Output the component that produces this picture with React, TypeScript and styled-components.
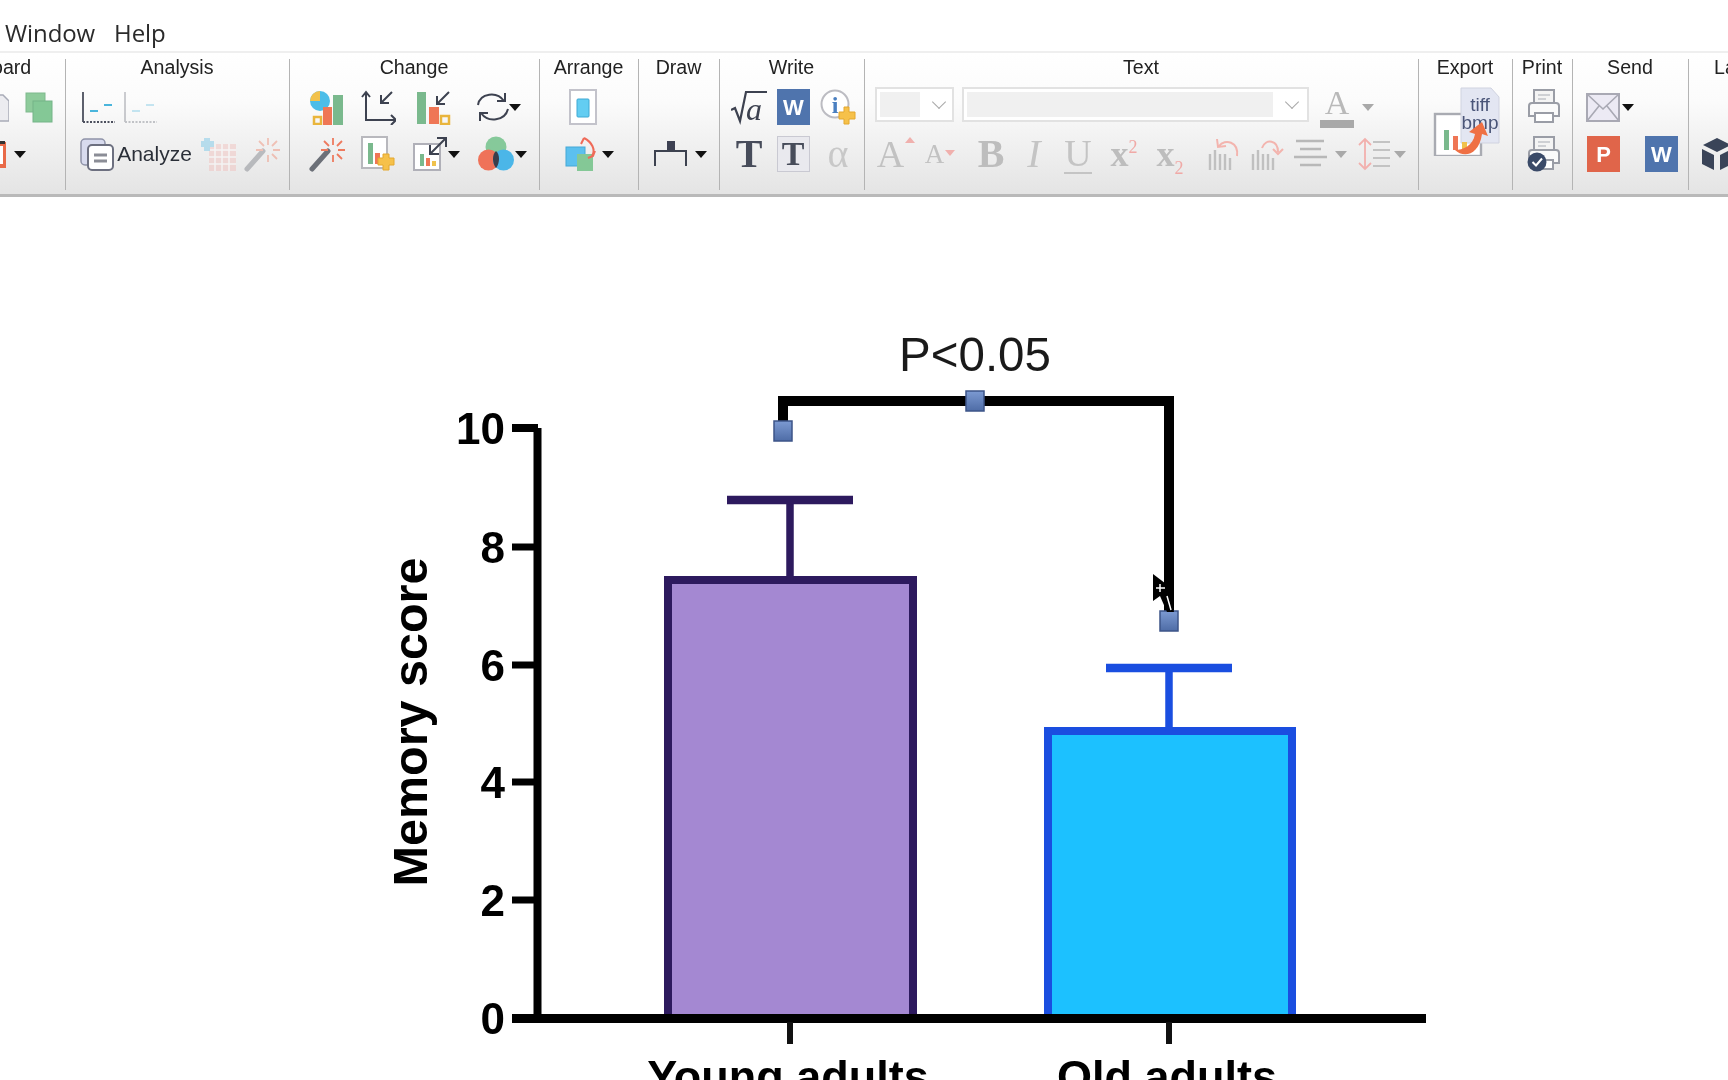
import React from 'react'
import styled, { createGlobalStyle } from 'styled-components'

const GlobalStyle = createGlobalStyle`
  html, body, #root {
    margin: 0;
    height: 100%;
    background: #fff;
    overflow: hidden;
  }
  body {
    font-family: "Liberation Sans", Arial, sans-serif;
  }
`

const Page = styled.div`
  display: flex;
  flex-direction: column;
  width: 1728px;
  height: 1080px;
  overflow: hidden;
`

const MenuBar = styled.div`
  display: flex;
  align-items: center;
  gap: 19px;
  height: 51px;
  padding: 13px 0 0 5px;
  box-sizing: border-box;
  flex: none;
  font-family: "Open Sans", sans-serif;
  font-size: 24px;
  letter-spacing: -0.1px;
  color: #2a2a2a;
  filter: blur(0.4px);
`

const Ribbon = styled.div`
  display: flex;
  flex: none;
  height: 146px;
  box-sizing: border-box;
  border-top: 2px solid #efefef;
  border-bottom: 3px solid #b9b9b9;
  background: linear-gradient(#ffffff 0%, #fbfbfb 35%, #e4e4e4 100%);
  overflow: hidden;
  filter: blur(0.6px);
`

const Group = styled.div<{ $width: number }>`
  position: relative;
  flex: none;
  width: ${({ $width }) => $width}px;

  &::after {
    content: '';
    position: absolute;
    right: 0;
    top: 6px;
    bottom: 4px;
    width: 1px;
    background: #b4b4b4;
  }
`

const LastGroup = styled.div`
  flex: 1;
  overflow: hidden;
`

const GroupLabel = styled.div<{ $left?: number }>`
  height: 28px;
  line-height: 28px;
  text-align: ${({ $left }) => ($left !== undefined ? 'left' : 'center')};
  margin-left: ${({ $left }) => $left ?? -2}px;
  font-size: 19.600px;
  color: #222;
  white-space: nowrap;
`

const Rows = styled.div`
  display: flex;
  flex-direction: column;
  gap: 3px;
  padding-top: 4px;
`

const Row = styled.div`
  display: flex;
  align-items: center;
  height: 44px;
`

const Slot = styled.div<{ $w?: number; $ml?: number }>`
  display: flex;
  align-items: center;
  justify-content: center;
  flex: none;
  width: ${({ $w }) => $w ?? 36}px;
  margin-left: ${({ $ml }) => $ml ?? 0}px;
  height: 36px;
`

const Dim = styled.div`
  display: flex;
  opacity: 0.4;
`

const Arrow = styled.div<{ $muted?: boolean }>`
  width: 0;
  height: 0;
  border-left: 6px solid transparent;
  border-right: 6px solid transparent;
  border-top: 7px solid ${({ $muted }) => ($muted ? '#a9a9a9' : '#111')};
`

const AnalyzeLabel = styled.span`
  font-size: 21px;
  color: #2a2f38;
`

const Glyph = styled.span<{ $size: number; $color: string; $bold?: boolean; $italic?: boolean; $under?: boolean }>`
  font-family: "Liberation Serif", serif;
  font-size: ${({ $size }) => $size}px;
  line-height: 1;
  color: ${({ $color }) => $color};
  font-weight: ${({ $bold }) => ($bold ? 700 : 400)};
  font-style: ${({ $italic }) => ($italic ? 'italic' : 'normal')};
  border-bottom: ${({ $under, $color }) => ($under ? `2px solid ${$color}` : 'none')};
  white-space: nowrap;

  sup, sub {
    font-size: 0.5em;
    font-weight: 400;
    color: #f0a9a6;
    line-height: 0;
  }
`

const BoxedGlyph = styled(Slot)`
  background: #e9e9ee;
  border: 1px solid #c9c9d2;
  box-sizing: border-box;
  width: 33px;
  height: 36px;
`

const SizeStep = styled.div`
  display: flex;
  align-items: flex-start;
  gap: 1px;
`

const Caret = styled.div<{ $up?: boolean }>`
  width: 0;
  height: 0;
  margin-top: ${({ $up }) => ($up ? 2 : 9)}px;
  border-left: 5px solid transparent;
  border-right: 5px solid transparent;
  border-bottom: ${({ $up }) => ($up ? '6px solid #f0b0ad' : 'none')};
  border-top: ${({ $up }) => ($up ? 'none' : '6px solid #f0b0ad')};
`

const ColorSwatch = styled.div`
  display: flex;
  flex-direction: column;
  align-items: center;
  width: 34px;

  &::after {
    content: '';
    align-self: stretch;
    height: 8px;
    background: #a9a9a9;
  }
`

const Combo = styled.div<{ $w: number; $ml: number; $fill: number }>`
  display: flex;
  align-items: center;
  box-sizing: border-box;
  flex: none;
  width: ${({ $w }) => $w}px;
  margin: -6px 0 0 ${({ $ml }) => $ml}px;
  height: 35px;
  padding: 3px 0 3px 3px;
  background: #fff;
  border: 2px solid #e2e2e2;

  &::before {
    content: '';
    width: ${({ $fill }) => $fill}px;
    align-self: stretch;
    background: #f0f0f0;
  }
`

const Chevron = styled.div`
  width: 9px;
  height: 9px;
  margin: -5px 0 0 14px;
  border-right: 1.5px solid #a8a8a8;
  border-bottom: 1.5px solid #a8a8a8;
  transform: rotate(45deg);
`

const BigSlot = styled.div`
  width: 70px;
  height: 70px;
  margin: 5px 0 0 14px;
`

const Canvas = styled.div`
  flex: 1;
  min-height: 0;
  filter: blur(0.35px);
`

const ChartSvg = styled.svg`
  display: block;
`

const Icon = ({ children, size = 36 }: { children: React.ReactNode; size?: number }) => (
  <svg width={size} height={size} viewBox="0 0 36 36" fill="none">
    {children}
  </svg>
)

const Handle = ({ x, y }: { x: number; y: number }) => (
  <rect x={x - 9} y={y - 10} width={18} height={20} fill="url(#handle)" stroke="#3d5488" strokeWidth={1.5} />
)

const CopyGreen = () => (
  <Icon>
    <rect x="7" y="4" width="19" height="19" fill="#8ecb9b" stroke="#7fb98d" />
    <rect x="14" y="12" width="19" height="21" fill="#84c896" stroke="#74b488" />
  </Icon>
)

const PaperCropped = () => (
  <svg width="9" height="36" viewBox="0 0 9 36" fill="none">
    <path d="M0 6h3l6 6v20H0" fill="#ececf0" stroke="#a9acb8" strokeWidth="1.5" />
  </svg>
)

const RedCropped = () => (
  <svg width="8" height="36" viewBox="0 0 8 36" fill="none">
    <rect x="-4" y="6" width="10" height="26" fill="#e96a48" />
    <rect x="-4" y="10" width="7" height="18" fill="#fff" />
    <rect x="-4" y="5" width="9" height="3" fill="#333" />
  </svg>
)

const ErrorPlot = ({ faint }: { faint?: boolean }) => (
  <Icon>
    <g opacity={faint ? 0.3 : 1}>
      <path d="M4 3v30" stroke="#4b4f5d" strokeWidth="1.8" />
      <path d="M4 33h32" stroke="#4b4f5d" strokeWidth="1.8" strokeDasharray="2 1.5" />
      <path d="M11 22h8M25 16h8" stroke="#4ab5dc" strokeWidth="2" />
    </g>
  </Icon>
)

const AnalyzeIcon = () => (
  <Icon>
    <rect x="2" y="3" width="24" height="26" rx="4" fill="#d8dbee" stroke="#8f93a8" strokeWidth="1.5" />
    <rect x="9" y="9" width="25" height="25" rx="4" fill="#fff" stroke="#6d7080" strokeWidth="2" />
    <path d="M15 19h13M15 25h13" stroke="#8b8d96" strokeWidth="3" />
  </Icon>
)

const GridIcon = () => (
  <Dim>
    <Icon>
      <rect x="8" y="8" width="27" height="27" fill="#f2b8b4" />
      <path d="M14 8v27M21 8v27M28 8v27M8 14h27M8 21h27M8 28h27" stroke="#fff" strokeWidth="1.5" />
      <path d="M3 2h6v3h4v6h-4v4H3v-4H0V5h3z" fill="#60bfe6" />
    </Icon>
  </Dim>
)

const Wand = ({ dim }: { dim?: boolean }) => {
  const icon = (
    <Icon>
      <path d="M3 33L19 15" stroke="#6c7078" strokeWidth="5" strokeLinecap="round" />
      <path d="M24 2v7M24 19v7M12 14h7M29 14h7M15 5l5 5M33 5l-5 5M33 23l-5-5" stroke="#ee7a5e" strokeWidth="1.8" />
    </Icon>
  )
  return dim ? <Dim>{icon}</Dim> : icon
}

const PieBars = () => (
  <Icon>
    <circle cx="11" cy="12" r="10" fill="#4cbde8" />
    <path d="M11 12V2A10 10 0 0 0 1 12z" fill="#f3c24b" />
    <rect x="24" y="6" width="10" height="30" fill="#7ab98d" />
    <rect x="14" y="18" width="9" height="18" fill="#ef7655" />
    <rect x="5" y="28" width="7" height="7" fill="none" stroke="#e9b53c" strokeWidth="2.500" />
  </Icon>
)

const AxisArrows = () => (
  <Icon>
    <path d="M6 3v28h30M2 8l4-5 4 5M31 26l5 5-5 5" stroke="#3d4250" strokeWidth="2" />
    <path d="M32 3L21 14M21 6v8h8" stroke="#3d4250" strokeWidth="2" />
  </Icon>
)

const BarsArrow = () => (
  <Icon>
    <rect x="1" y="3" width="9" height="32" fill="#7ab98d" />
    <rect x="13" y="18" width="10" height="17" fill="#ef7655" />
    <rect x="25" y="27" width="8" height="8" fill="none" stroke="#e9b53c" strokeWidth="2.500" />
    <path d="M33 3L21 15M21 7v8h8" stroke="#3d4250" strokeWidth="2" />
  </Icon>
)

const Refresh = () => (
  <Icon>
    <path d="M3 16C5 4 22 2 29 12M33 20C30 32 13 34 6 24" stroke="#3d4250" strokeWidth="2" />
    <path d="M22 12h8V4M13 24H5v8" stroke="#3d4250" strokeWidth="2" />
  </Icon>
)

const ChartPlus = () => (
  <Icon>
    <rect x="2" y="1" width="25" height="31" fill="#fff" stroke="#b8b8bd" strokeWidth="2" />
    <rect x="8" y="7" width="5" height="21" fill="#7ab98d" />
    <rect x="15" y="17" width="5" height="11" fill="#ef7655" />
    <path d="M23 18h6v4h5v7h-5v5h-6v-5h-5v-7h5z" fill="#f6c14a" stroke="#e4a82f" />
  </Icon>
)

const ChartResize = () => (
  <Icon>
    <rect x="2" y="8" width="26" height="26" fill="#fff" stroke="#b0b0b8" strokeWidth="2" />
    <rect x="8" y="18" width="4" height="12" fill="#7ab98d" />
    <rect x="14" y="22" width="4" height="8" fill="#ef7655" />
    <rect x="20" y="25" width="4" height="5" fill="#f0c24c" />
    <path d="M18 18L34 2M25 2h9v9M18 9v9h9" stroke="#3d4250" strokeWidth="2" />
  </Icon>
)

const Venn = () => (
  <Icon>
    <circle cx="18" cy="11" r="10.5" fill="#86c99a" />
    <circle cx="10.5" cy="24" r="10.5" fill="#ef7259" />
    <circle cx="25.5" cy="24" r="10.5" fill="#4bb6e8" />
    <path d="M18 15c4 3 4 12 0 17-4-5-4-14 0-17z" fill="#3b3d4a" />
  </Icon>
)

const BringFront = () => (
  <Icon>
    <rect x="5" y="1" width="26" height="34" fill="#fff" stroke="#c3c3cb" strokeWidth="2" />
    <rect x="12" y="10" width="12" height="18" rx="1" fill="#63cdf2" stroke="#3fa9d4" />
  </Icon>
)

const Rotate = () => (
  <Icon>
    <rect x="2" y="11" width="19" height="19" fill="#5cc0ee" stroke="#45a8d6" />
    <rect x="13" y="18" width="16" height="17" fill="#84c896" />
    <path d="M20 2c8 4 12 12 8 18M24 22l5-2 2-5M20 2l-3 6" stroke="#ef6a58" strokeWidth="2" />
  </Icon>
)

const Connector = () => (
  <Icon>
    <rect x="15" y="5" width="8" height="9" fill="#3d4152" />
    <path d="M3 30V15h31v15" stroke="#3d4250" strokeWidth="2" />
  </Icon>
)

const Sqrt = () => (
  <Icon>
    <path d="M0 21l4-2 5 13L15 3h21" stroke="#3d4250" strokeWidth="2.200" />
    <text x="15" y="31" fontFamily="Liberation Serif, serif" fontStyle="italic" fontSize="32" fill="#3d4250">
      a
    </text>
  </Icon>
)

const OfficeTile = ({ letter, color }: { letter: string; color: string }) => (
  <svg width="33" height="36" viewBox="0 0 33 36">
    <rect width="33" height="36" fill={color} />
    <text x="16.5" y="26" textAnchor="middle" fontFamily="Liberation Sans, sans-serif" fontWeight="700" fontSize="22" fill="#fff">
      {letter}
    </text>
  </svg>
)

const InfoPlus = () => (
  <Icon>
    <circle cx="15" cy="15" r="13.5" fill="#fff" stroke="#bcbcc2" strokeWidth="2" />
    <text x="15" y="24" textAnchor="middle" fontFamily="Liberation Serif, serif" fontWeight="700" fontSize="24" fill="#4a7fc0">
      i
    </text>
    <path d="M24 18h5v5h6v7h-6v5h-5v-5h-5v-7h5z" fill="#f6c14a" stroke="#e4a82f" />
  </Icon>
)

const FontColor = () => (
  <ColorSwatch>
    <Glyph $size={34} $color="#b9b9b9">A</Glyph>
  </ColorSwatch>
)

const SizeA = ({ up }: { up?: boolean }) => (
  <SizeStep>
    <Glyph $size={up ? 38 : 27} $color="#c2c2c2">A</Glyph>
    <Caret $up={up} />
  </SizeStep>
)

const UndoBars = ({ flip }: { flip?: boolean }) => (
  <Icon>
    <path d="M5 18v16M10 14v20M15 18v16M20 18v16M25 22v12" stroke="#c0c0c0" strokeWidth="2.400" />
    <path
      d={flip ? 'M14 12C18 2 30 4 30 16M25 13l5 5 5-5' : 'M32 20C34 6 20 2 14 10M12 3l1 8 8-1'}
      stroke="#f3b4ae"
      strokeWidth="2"
    />
  </Icon>
)

const AlignLines = () => (
  <Icon>
    <path d="M4 5h28M8 13h21M2 21h33M8 29h21" stroke="#b8b8b8" strokeWidth="2.400" />
  </Icon>
)

const LineSpacing = () => (
  <Icon>
    <path d="M8 3v30M2 9l6-6 6 6M2 27l6 6 6-6" stroke="#f2b0ad" strokeWidth="1.800" />
    <path d="M16 6h17M16 14h17M16 22h17M16 30h17" stroke="#c3c3c3" strokeWidth="2.200" />
  </Icon>
)

const ExportIcon = () => (
  <svg width="70" height="70" viewBox="0 0 70 70" fill="none">
    <rect x="2" y="28" width="46" height="42" fill="#fff" stroke="#a9abb2" strokeWidth="2.400" />
    <path d="M28 2h30l8 9v46H28z" fill="#e3e6f2" stroke="#d0d3e0" />
    <text x="47" y="25" textAnchor="middle" fontFamily="Liberation Sans, sans-serif" fontSize="19" fill="#4a5578">
      tiff
    </text>
    <text x="47" y="43" textAnchor="middle" fontFamily="Liberation Sans, sans-serif" fontSize="19" fill="#4a5578">
      bmp
    </text>
    <rect x="11" y="44" width="5" height="20" fill="#7ab98d" />
    <rect x="20" y="50" width="5" height="14" fill="#ef7655" />
    <rect x="29" y="56" width="5" height="8" fill="#f0c24c" />
    <path d="M22 64c8 8 24 6 27-16l6 2-6-14-13 10 6 2c-2 12-12 16-20 16z" fill="#ef7044" />
  </svg>
)

const Printer = ({ check }: { check?: boolean }) => (
  <Icon>
    <rect x="8" y="1" width="20" height="14" fill="#f4f4f4" stroke="#9a9da6" strokeWidth="2" />
    <path d="M12 6h12M12 10h8" stroke="#c1c3c9" strokeWidth="1.500" />
    <path d="M8 27H3V17q0-3 3-3h24q3 0 3 3v10h-5" fill="#fafafa" stroke="#9a9da6" strokeWidth="2" />
    <rect x="9" y="24" width="18" height="9" fill="#fff" stroke="#9a9da6" strokeWidth="2" />
    {check && (
      <>
        <circle cx="11" cy="26" r="9.500" fill="#3a4a68" />
        <path d="M6.500 26l3.500 3.500 6-7" stroke="#fff" strokeWidth="2" />
      </>
    )}
  </Icon>
)

const Envelope = () => (
  <Icon>
    <rect x="2" y="5" width="32" height="27" fill="#eceaf4" stroke="#a9a9b4" strokeWidth="2" />
    <path d="M2 5l16 15L34 5M2 32l12-15M34 32L22 17" stroke="#a9a9b4" strokeWidth="1.600" />
  </Icon>
)

const Cube = () => (
  <Icon>
    <path d="M18 2l14 7-14 7-14-7z" fill="#3a4458" />
    <path d="M3 13l12 6v15L3 28z" fill="#3a4458" />
    <path d="M33 13l-12 6v15l12-6z" fill="#3a4458" />
  </Icon>
)

const Menu = () => (
  <MenuBar>
    <span>Window</span>
    <span>Help</span>
  </MenuBar>
)

const Toolbar = () => (
  <Ribbon>
    <Group $width={66}>
      <GroupLabel $left={-8}>oard</GroupLabel>
      <Rows>
        <Row>
          <PaperCropped />
          <Slot $ml={10}>
            <CopyGreen />
          </Slot>
        </Row>
        <Row>
          <RedCropped />
          <Slot $w={12} $ml={6}>
            <Arrow />
          </Slot>
        </Row>
      </Rows>
    </Group>

    <Group $width={224}>
      <GroupLabel>Analysis</GroupLabel>
      <Rows>
        <Row>
          <Slot $ml={13}>
            <ErrorPlot />
          </Slot>
          <Slot $ml={6}>
            <ErrorPlot faint />
          </Slot>
        </Row>
        <Row>
          <Slot $ml={13}>
            <AnalyzeIcon />
          </Slot>
          <Slot $w={75} $ml={2}>
            <AnalyzeLabel>Analyze</AnalyzeLabel>
          </Slot>
          <Slot $ml={9}>
            <GridIcon />
          </Slot>
          <Slot $ml={7}>
            <Wand dim />
          </Slot>
        </Row>
      </Rows>
    </Group>

    <Group $width={250}>
      <GroupLabel>Change</GroupLabel>
      <Rows>
        <Row>
          <Slot $ml={19}>
            <PieBars />
          </Slot>
          <Slot $ml={15}>
            <AxisArrows />
          </Slot>
          <Slot $ml={20}>
            <BarsArrow />
          </Slot>
          <Slot $ml={23}>
            <Refresh />
          </Slot>
          <Slot $w={12} $ml={-2}>
            <Arrow />
          </Slot>
        </Row>
        <Row>
          <Slot $ml={19}>
            <Wand />
          </Slot>
          <Slot $ml={15}>
            <ChartPlus />
          </Slot>
          <Slot $ml={16}>
            <ChartResize />
          </Slot>
          <Slot $w={12}>
            <Arrow />
          </Slot>
          <Slot $ml={18}>
            <Venn />
          </Slot>
          <Slot $w={12} $ml={1}>
            <Arrow />
          </Slot>
        </Row>
      </Rows>
    </Group>

    <Group $width={99}>
      <GroupLabel>Arrange</GroupLabel>
      <Rows>
        <Row>
          <Slot $ml={25}>
            <BringFront />
          </Slot>
        </Row>
        <Row>
          <Slot $ml={24}>
            <Rotate />
          </Slot>
          <Slot $w={12} $ml={2}>
            <Arrow />
          </Slot>
        </Row>
      </Rows>
    </Group>

    <Group $width={81}>
      <GroupLabel>Draw</GroupLabel>
      <Rows>
        <Row />
        <Row>
          <Slot $ml={13}>
            <Connector />
          </Slot>
          <Slot $w={12} $ml={7}>
            <Arrow />
          </Slot>
        </Row>
      </Rows>
    </Group>

    <Group $width={145}>
      <GroupLabel>Write</GroupLabel>
      <Rows>
        <Row>
          <Slot $ml={11}>
            <Sqrt />
          </Slot>
          <Slot $ml={8}>
            <OfficeTile letter="W" color="#4f74ad" />
          </Slot>
          <Slot $ml={9}>
            <InfoPlus />
          </Slot>
        </Row>
        <Row>
          <Slot $ml={11}>
            <Glyph $size={40} $color="#474c5a" $bold>T</Glyph>
          </Slot>
          <Slot $ml={8}>
            <BoxedGlyph>
              <Glyph $size={34} $color="#474c5a" $bold>T</Glyph>
            </BoxedGlyph>
          </Slot>
          <Slot $ml={9}>
            <Glyph $size={40} $color="#c8c8c8">α</Glyph>
          </Slot>
        </Row>
      </Rows>
    </Group>

    <Group $width={554}>
      <GroupLabel>Text</GroupLabel>
      <Rows>
        <Row>
          <Combo $w={79} $ml={10} $fill={40}>
            <Chevron />
          </Combo>
          <Combo $w={347} $ml={8} $fill={306}>
            <Chevron />
          </Combo>
          <Slot $ml={10}>
            <FontColor />
          </Slot>
          <Slot $w={12} $ml={7}>
            <Arrow $muted />
          </Slot>
        </Row>
        <Row>
          <Slot $ml={13}>
            <SizeA up />
          </Slot>
          <Slot $ml={8}>
            <SizeA />
          </Slot>
          <Slot $ml={15}>
            <Glyph $size={40} $color="#bdbdbd" $bold>B</Glyph>
          </Slot>
          <Slot $ml={7}>
            <Glyph $size={40} $color="#c4c4c4" $italic>I</Glyph>
          </Slot>
          <Slot $ml={8}>
            <Glyph $size={38} $color="#c4c4c4" $under>U</Glyph>
          </Slot>
          <Slot $ml={10}>
            <Glyph $size={36} $color="#bdbdbd" $bold>x<sup>2</sup></Glyph>
          </Slot>
          <Slot $ml={10}>
            <Glyph $size={36} $color="#bdbdbd" $bold>x<sub>2</sub></Glyph>
          </Slot>
          <Slot $ml={17}>
            <UndoBars />
          </Slot>
          <Slot $ml={7}>
            <UndoBars flip />
          </Slot>
          <Slot $ml={8}>
            <AlignLines />
          </Slot>
          <Slot $w={12} $ml={7}>
            <Arrow $muted />
          </Slot>
          <Slot $ml={10}>
            <LineSpacing />
          </Slot>
          <Slot $w={12} $ml={1}>
            <Arrow $muted />
          </Slot>
        </Row>
      </Rows>
    </Group>

    <Group $width={94}>
      <GroupLabel>Export</GroupLabel>
      <BigSlot>
        <ExportIcon />
      </BigSlot>
    </Group>

    <Group $width={60}>
      <GroupLabel>Print</GroupLabel>
      <Rows>
        <Row>
          <Slot $ml={13}>
            <Printer />
          </Slot>
        </Row>
        <Row>
          <Slot $ml={13}>
            <Printer check />
          </Slot>
        </Row>
      </Rows>
    </Group>

    <Group $width={116}>
      <GroupLabel>Send</GroupLabel>
      <Rows>
        <Row>
          <Slot $ml={12}>
            <Envelope />
          </Slot>
          <Slot $w={12} $ml={1}>
            <Arrow />
          </Slot>
        </Row>
        <Row>
          <Slot $ml={12}>
            <OfficeTile letter="P" color="#e0654a" />
          </Slot>
          <Slot $ml={22}>
            <OfficeTile letter="W" color="#4f74ad" />
          </Slot>
        </Row>
      </Rows>
    </Group>

    <LastGroup>
      <GroupLabel $left={25}>La</GroupLabel>
      <Rows>
        <Row />
        <Row>
          <Slot $ml={10}>
            <Cube />
          </Slot>
        </Row>
      </Rows>
    </LastGroup>
  </Ribbon>
)

const yTicks = [
  { label: '10', y: 428 },
  { label: '8', y: 547 },
  { label: '6', y: 665 },
  { label: '4', y: 782 },
  { label: '2', y: 900 },
  { label: '0', y: 1018 },
]

const bars = [
  { name: 'Young adults', x0: 668, x1: 913, top: 580, cx: 790, capY: 500, labelX: 788, stroke: '#2d1a5e', fill: '#a488d2' },
  { name: 'Old adults', x0: 1048, x1: 1292, top: 731, cx: 1169, capY: 668, labelX: 1167, stroke: '#1a4ee0', fill: '#1cc1ff' },
]

const Chart = () => (
  <ChartSvg width={1728} height={883} viewBox="0 197 1728 883">
    <defs>
      <linearGradient id="handle" x1="0" y1="0" x2="0" y2="1">
        <stop offset="0" stopColor="#7c9ad2" />
        <stop offset="1" stopColor="#4e6ca6" />
      </linearGradient>
    </defs>

    <text x={975} y={371} textAnchor="middle" fontFamily="Liberation Sans, sans-serif" fontSize={47.500} fill="#1a1a1a">
      P&lt;0.05
    </text>

    {bars.map((b) => (
      <g key={b.name} stroke={b.stroke}>
        <rect x={b.x0} y={b.top} width={b.x1 - b.x0} height={1018 - b.top} fill={b.fill} strokeWidth={8} />
        <path d={`M${b.cx} ${b.top}V${b.capY}`} strokeWidth={7.500} />
        <path d={`M${b.cx - 63} ${b.capY}H${b.cx + 63}`} strokeWidth={8.500} />
      </g>
    ))}

    <path d="M537.500 1018V428" stroke="#000" strokeWidth={8} />
    {yTicks.map((t) => (
      <g key={t.label}>
        <path d={`M512 ${t.y}H538`} stroke="#000" strokeWidth={t.label === '10' || t.label === '0' ? 8 : 7} />
        <text x={505} y={t.y + 16} textAnchor="end" fontFamily="Liberation Sans, sans-serif" fontWeight={700} fontSize={44} fill="#000">
          {t.label}
        </text>
      </g>
    ))}
    <path d="M512 1018.500H1426" stroke="#000" strokeWidth={9} />

    {bars.map((b) => (
      <g key={b.name + '-axis'}>
        <path d={`M${b.cx} 1022V1044`} stroke="#111" strokeWidth={6} />
        <text x={b.labelX} y={1092} textAnchor="middle" fontFamily="Liberation Sans, sans-serif" fontWeight={700} fontSize={45} fill="#000">
          {b.name}
        </text>
      </g>
    ))}

    <text
      transform="translate(427 722) rotate(-90)"
      textAnchor="middle"
      fontFamily="Liberation Sans, sans-serif"
      fontWeight={700}
      fontSize={48.500}
      fill="#000"
    >
      Memory score
    </text>

    <path d="M783 431V401H1169V620" fill="none" stroke="#000" strokeWidth={10} />
    <Handle x={783} y={431} />
    <Handle x={975} y={401} />
    <Handle x={1169} y={621} />

    <path d="M1153 574V601L1160 596L1167 612H1174L1170 596L1174 590z" fill="#000" />
    <path d="M1156 588h9M1160 584v8M1167 596l4 14" stroke="#fff" strokeWidth={1.500} />
  </ChartSvg>
)

export default function App() {
  return (
    <>
      <GlobalStyle />
      <Page>
        <Menu />
        <Toolbar />
        <Canvas>
          <Chart />
        </Canvas>
      </Page>
    </>
  )
}
